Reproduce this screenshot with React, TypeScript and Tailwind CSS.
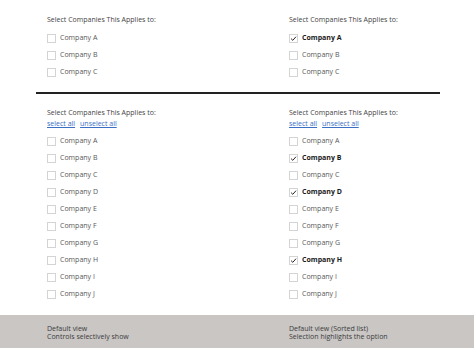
import React from "react";

const font = { fontFamily: '"Open Sans", "Noto Sans", sans-serif' };

function Box({ checked }: { checked: boolean }) {
  return (
    <span className="flex h-[9px] w-[9px] shrink-0 items-center justify-center border border-[#d4d4d4] bg-white">
      {checked && (
        <svg viewBox="0 0 10 10" className="h-[7px] w-[7px]">
          <path d="M1.5 5.2 L4 7.6 L8.6 2.4" fill="none" stroke="#222" strokeWidth="1.4" />
        </svg>
      )}
    </span>
  );
}

function Option({ label, checked }: { label: string; checked: boolean }) {
  return (
    <div className="flex h-[17px] items-center gap-[4px]">
      <Box checked={checked} />
      <span className={checked ? "font-bold text-[#1a1a1a]" : "text-[#585858]"}>{label}</span>
    </div>
  );
}

function Group({ items, checked, links }: { items: string[]; checked: string[]; links?: boolean }) {
  return (
    <div className="flex flex-col">
      <p className="h-[11px] leading-[11px] text-[#444]">Select Companies This Applies to:</p>
      {links && (
        <p className="flex h-[12px] gap-[5px] leading-[12px] text-[#3a6fc4]">
          <span className="underline">select all</span>
          <span className="underline">unselect all</span>
        </p>
      )}
      <div className={links ? "mt-[3px] flex flex-col" : "mt-[5px] flex flex-col"}>
        {items.map((c) => (
          <Option key={c} label={"Company " + c} checked={checked.includes(c)} />
        ))}
      </div>
    </div>
  );
}

export default function App() {
  const all = ["A", "B", "C", "D", "E", "F", "G", "H", "I", "J"];
  return (
    <div className="flex h-[348px] w-[474px] flex-col bg-white text-[7px]" style={font}>
      <div className="grid grid-cols-[242px_1fr] pl-[47px] pt-[14px]">
        <Group items={["A", "B", "C"]} checked={[]} />
        <Group items={["A", "B", "C"]} checked={["A"]} />
      </div>
      <div className="ml-[36px] mt-[11px] h-[2px] w-[404px] bg-[#222]" />
      <div className="grid grid-cols-[242px_1fr] pl-[47px] pt-[13px]">
        <Group items={all} checked={[]} links />
        <Group items={all} checked={["B", "D", "H"]} links />
      </div>
      <div className="mt-auto grid h-[33px] grid-cols-[242px_1fr] bg-[#c9c6c4] pl-[47px] pt-[10px] leading-[8px] text-[#3c3c3c]">
        <div>
          <p>Default view</p>
          <p>Controls selectively show</p>
        </div>
        <div>
          <p>Default view (Sorted list)</p>
          <p>Selection highlights the option</p>
        </div>
      </div>
    </div>
  );
}
